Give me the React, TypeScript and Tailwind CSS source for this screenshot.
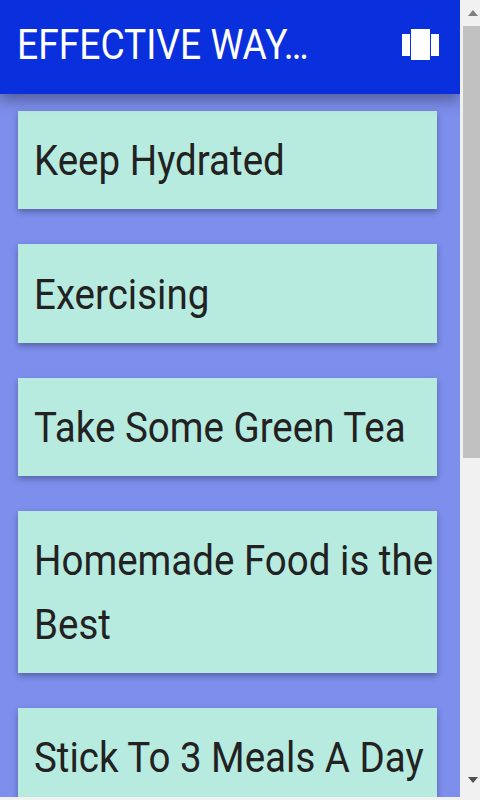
const items = [
  ['Keep Hydrated'],
  ['Exercising'],
  ['Take Some Green Tea'],
  ['Homemade Food is the', 'Best'],
  ['Stick To 3 Meals A Day'],
]

function CarouselIcon() {
  return (
    <svg className="w-[37px] h-[31px]" viewBox="0 0 37 31" fill="#fff">
      <rect x="0" y="5" width="8" height="22" />
      <rect x="29" y="5" width="8" height="22" />
      <rect x="9" y="0" width="19" height="31" />
    </svg>
  )
}

export default function App() {
  return (
    <div className="flex h-[800px] w-[480px] overflow-hidden bg-[#f1f1f1] font-['Roboto',sans-serif]">
      <div className="w-[460px] h-[797px] overflow-hidden bg-[#7d8eec] flex flex-col">
        <header className="relative z-10 h-[94px] shrink-0 bg-[#0a2fdc] flex items-center justify-between pl-[17px] pr-[21px] pb-[6px] shadow-[0_6px_14px_rgba(0,0,0,0.35)]">
          <h1 className="mt-[2px] text-[37.2px] leading-none text-white scale-y-[1.14]">EFFECTIVE WAY…</h1>
          <CarouselIcon />
        </header>
        <div className="flex flex-col gap-[35px] pt-[17px] pl-[18px] pr-[23px]">
          {items.map((lines) => (
            <div key={lines[0]} className="shrink-0 bg-[#b8ebdf] pl-[16px] py-[17.33px] text-[38.5px] leading-[63.67px] text-[#222] shadow-[0_3px_6px_rgba(0,0,0,0.3)]">
              {lines.map((line) => (
                <div key={line} className="scale-y-[1.12] whitespace-nowrap">{line}</div>
              ))}
            </div>
          ))}
        </div>
      </div>
      <div className="w-[20px] h-full flex flex-col">
        <div className="h-[26px] w-full flex items-center justify-center pl-[5px]">
          <div className="w-0 h-0 border-x-[5px] border-x-transparent border-b-[6px] border-b-[#808080]" />
        </div>
        <div className="ml-[3px] w-[17px] h-[432px] bg-[#c1c1c1]" />
        <div className="flex-1" />
        <div className="h-[30px] w-full flex items-center justify-center pl-[5px] pb-[10px]">
          <div className="w-0 h-0 border-x-[5px] border-x-transparent border-t-[6px] border-t-[#505050]" />
        </div>
      </div>
    </div>
  )
}
